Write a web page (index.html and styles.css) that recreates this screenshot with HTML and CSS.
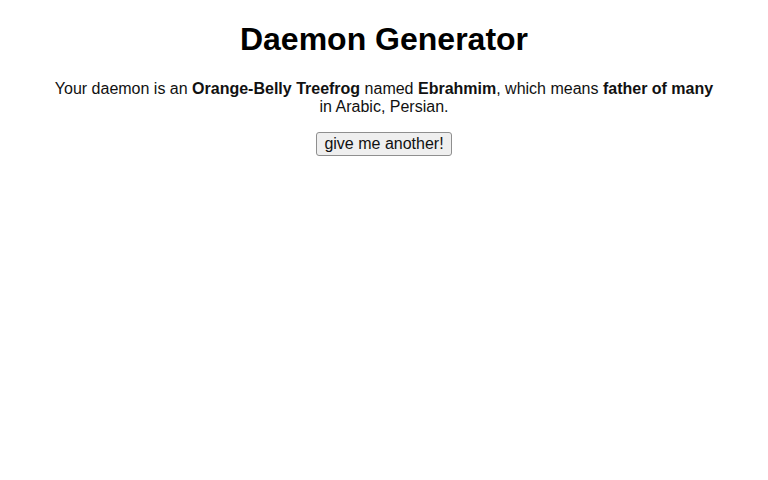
FILE: index.html
```html
<!DOCTYPE html>
<html>
<head>
<meta charset="utf-8">
<link rel="stylesheet" href="styles.css">
</head>
<body>
<div class="page">
  <h1 class="title">Daemon Generator</h1>
  <p class="result">Your daemon is an <b>Orange-Belly Treefrog</b> named <b>Ebrahmim</b>, which means <b>father of many</b> in Arabic, Persian.</p>
  <p class="actions"><button class="again">give me another!</button></p>
</div>
</body>
</html>
```
FILE: styles.css
```css
html, body {
  margin: 0;
  background: #fff;
}
.page {
  font-family: "Liberation Sans", Arial, sans-serif;
  color: #000;
  text-align: center;
  font-size: 16px;
  line-height: 18px;
}
.title {
  font-size: 32px;
  line-height: 37px;
  font-weight: bold;
  margin: 21px 0 22px;
}
.result {
  max-width: 670px;
  margin: 16px auto;
  color: #111;
}
.actions {
  margin: 16px 0;
}
.again {
  font-family: "Liberation Sans", Arial, sans-serif;
  font-size: 16px;
  line-height: 18px;
  color: #111;
  background: #efefef;
  border: 1px solid #8f8f8f;
  border-radius: 3px;
  padding: 2px 7px;
}
```
